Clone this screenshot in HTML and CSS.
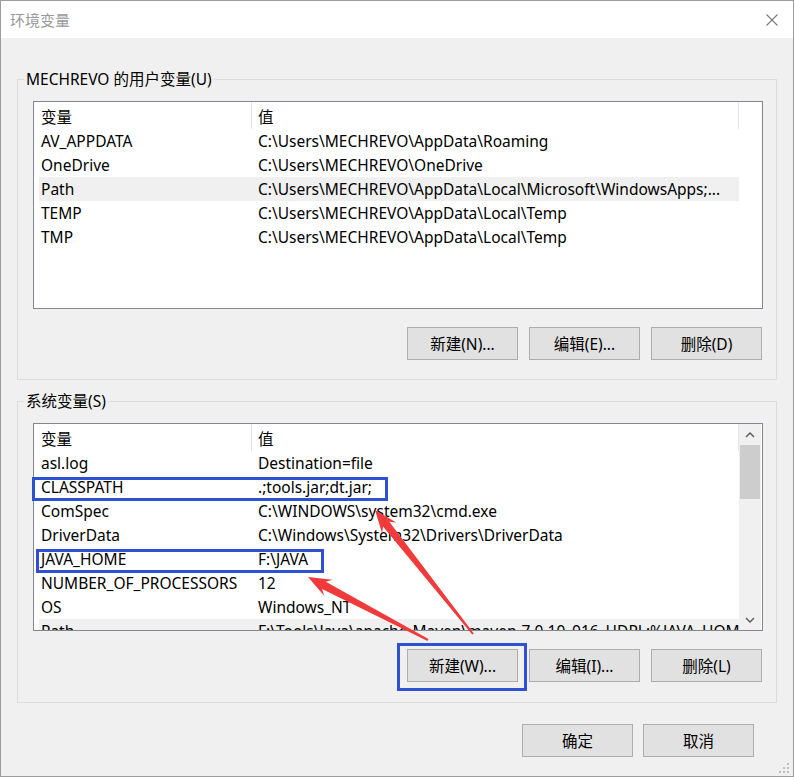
FILE: index.html
```html
<!DOCTYPE html>
<html lang="zh-CN">
<head>
<meta charset="utf-8">
<title>环境变量</title>
<link rel="stylesheet" href="styles.css">
</head>
<body>
<div class="window">
  <div class="titlebar">
    <span class="title">环境变量</span>
    <svg class="close" width="12" height="12" viewBox="0 0 12 12"><path d="M0.5 0.5 L11.5 11.5 M11.5 0.5 L0.5 11.5" stroke="#7a7a7a" stroke-width="1.1" fill="none"/></svg>
  </div>
  <div class="content">
    <fieldset class="group group-user">
      <legend>MECHREVO 的用户变量(U)</legend>
      <div class="list">
        <div class="rows">
          <div class="head"><span class="hc1">变量</span><span class="hc2">值</span></div>
          <div class="row"><span>AV_APPDATA</span><span>C:\Users\MECHREVO\AppData\Roaming</span></div>
          <div class="row"><span>OneDrive</span><span>C:\Users\MECHREVO\OneDrive</span></div>
          <div class="row sel"><span>Path</span><span>C:\Users\MECHREVO\AppData\Local\Microsoft\WindowsApps;...</span></div>
          <div class="row"><span>TEMP</span><span>C:\Users\MECHREVO\AppData\Local\Temp</span></div>
          <div class="row"><span>TMP</span><span>C:\Users\MECHREVO\AppData\Local\Temp</span></div>
        </div>
      </div>
      <div class="btns">
        <div class="btn">新建(N)...</div>
        <div class="btn">编辑(E)...</div>
        <div class="btn">删除(D)</div>
      </div>
    </fieldset>

    <fieldset class="group group-sys">
      <legend>系统变量(S)</legend>
      <div class="list">
        <div class="rows">
          <div class="head"><span class="hc1">变量</span><span class="hc2">值</span></div>
          <div class="row"><span>asl.log</span><span>Destination=file</span></div>
          <div class="row"><span>CLASSPATH</span><span>.;tools.jar;dt.jar;</span></div>
          <div class="row"><span>ComSpec</span><span>C:\WINDOWS\system32\cmd.exe</span></div>
          <div class="row"><span>DriverData</span><span>C:\Windows\System32\Drivers\DriverData</span></div>
          <div class="row"><span>JAVA_HOME</span><span>F:\JAVA</span></div>
          <div class="row"><span>NUMBER_OF_PROCESSORS</span><span>12</span></div>
          <div class="row"><span>OS</span><span>Windows_NT</span></div>
          <div class="row sel"><span>Path</span><span>F:\Tools\Java\apache-Maven\maven-7.0.10_016_HDPL;%JAVA_HOME%\bin;C:\...</span></div>
        </div>
        <div class="sb">
          <div class="sb-btn"><svg width="10" height="6" viewBox="0 0 10 6"><path d="M1 5 L5 1 L9 5" stroke="#606060" stroke-width="1.5" fill="none"/></svg></div>
          <div class="sb-thumb"></div>
          <div class="sb-space"></div>
          <div class="sb-btn"><svg width="10" height="6" viewBox="0 0 10 6"><path d="M1 1 L5 5 L9 1" stroke="#606060" stroke-width="1.5" fill="none"/></svg></div>
        </div>
      </div>
      <div class="btns">
        <div class="btn">新建(W)...</div>
        <div class="btn">编辑(I)...</div>
        <div class="btn">删除(L)</div>
      </div>
    </fieldset>

    <div class="dlg-btns">
      <div class="btn">确定</div>
      <div class="btn">取消</div>
    </div>
  </div>

  <svg class="grip" width="12" height="12" viewBox="0 0 12 12">
    <rect x="9" y="1" width="2" height="2" fill="#bdbdbd"/>
    <rect x="5" y="5" width="2" height="2" fill="#bdbdbd"/>
    <rect x="9" y="5" width="2" height="2" fill="#bdbdbd"/>
    <rect x="1" y="9" width="2" height="2" fill="#bdbdbd"/>
    <rect x="5" y="9" width="2" height="2" fill="#bdbdbd"/>
    <rect x="9" y="9" width="2" height="2" fill="#bdbdbd"/>
  </svg>

  <svg class="overlay" width="794" height="777" viewBox="0 0 794 777">
    <g fill="none" stroke="#2f50d2" stroke-width="3">
      <rect x="33.5" y="478.5" width="353" height="21"/>
      <rect x="37.5" y="550.5" width="285" height="21"/>
      <rect x="398.5" y="644.5" width="127" height="45"/>
    </g>
    <g fill="#ef3b3b">
      <polygon points="375,510 396.3,522.5 389.3,521.7 473.8,633.4 472.2,634.6 383,526.6 382.2,533.6"/>
      <polygon points="308,577 332.6,579.7 325.8,581.8 428.5,639.1 427.5,640.9 322.1,588.9 324.2,595.7"/>
    </g>
  </svg>
</div>
</body>
</html>
```

FILE: styles.css
```css
html, body {
  margin: 0;
  padding: 0;
  background: #f0f0f0;
}

body {
  font-family: "Noto Sans", "Noto Sans CJK SC", sans-serif;
  font-size: 15.5px;
  color: #000;
}

.window {
  position: relative;
  width: 794px;
  height: 777px;
  box-sizing: border-box;
  border: 1px solid #9c9c9c;
  background: #f0f0f0;
  overflow: hidden;
}

.titlebar {
  height: 37px;
  background: #fff;
  display: flex;
  align-items: center;
  padding-left: 9px;
}

.title {
  font-family: "Noto Sans CJK SC", sans-serif;
  font-size: 15px;
  color: #9a9a9a;
  line-height: 20px;
}

.close {
  margin-left: auto;
  margin-right: 15px;
  display: block;
}

.content {
  padding: 0 16px;
}

.group {
  margin: 0;
  border: 1px solid #dcdcdc;
  padding: 12px 0 19px 6px;
  min-width: 0;
}

.group-user {
  margin-top: 31px;
}

.group-sys {
  margin-top: 11px;
  padding-bottom: 20px;
}

.group legend {
  padding: 0 2px;
  line-height: 20px;
}

.list {
  margin-left: 9px;
  width: 730px;
  height: 208px;
  box-sizing: border-box;
  border: 1px solid #828790;
  background: #fff;
  display: flex;
  padding-left: 5px;
  overflow: hidden;
}

.rows {
  width: 700px;
  flex: none;
}

.head {
  height: 27px;
  box-sizing: border-box;
  display: grid;
  grid-template-columns: 213px 1fr;
  border-right: 1px solid #e5e5e5;
}

.head span {
  line-height: 24px;
  padding-top: 3px;
  white-space: nowrap;
}

.hc1 {
  padding-left: 2px;
  border-right: 1px solid #e5e5e5;
}

.hc2 {
  padding-left: 6px;
}

.row {
  height: 24px;
  line-height: 24px;
  display: grid;
  grid-template-columns: 217px 1fr;
  white-space: nowrap;
}

.row span {
  padding-left: 2px;
  overflow: hidden;
}

.row.sel {
  background: #f0f0f0;
}

.sb {
  width: 22px;
  flex: none;
  background: #f0f0f0;
  display: flex;
  flex-direction: column;
}

.sb-btn {
  height: 21px;
  display: flex;
  align-items: center;
  justify-content: center;
}

.sb-btn svg {
  display: block;
}

.sb-thumb {
  margin-left: 1px;
  width: 20px;
  height: 54px;
  background: #cdcdcd;
}

.sb-space {
  flex: 1;
}

.btns {
  margin-left: 9px;
  width: 730px;
  margin-top: 18px;
  display: flex;
  justify-content: flex-end;
  gap: 11px;
  padding-right: 1px;
  box-sizing: border-box;
}

.btn {
  width: 111px;
  height: 33px;
  box-sizing: border-box;
  border: 1px solid #adadad;
  background: #e1e1e1;
  display: flex;
  align-items: center;
  justify-content: center;
  line-height: 20px;
  white-space: nowrap;
}

.dlg-btns {
  margin-top: 21px;
  display: flex;
  justify-content: flex-end;
  gap: 10px;
  padding-right: 23px;
}

.grip {
  position: absolute;
  right: 3px;
  bottom: 2px;
  display: block;
}

.overlay {
  position: absolute;
  left: -1px;
  top: -1px;
  pointer-events: none;
  display: block;
}
```
